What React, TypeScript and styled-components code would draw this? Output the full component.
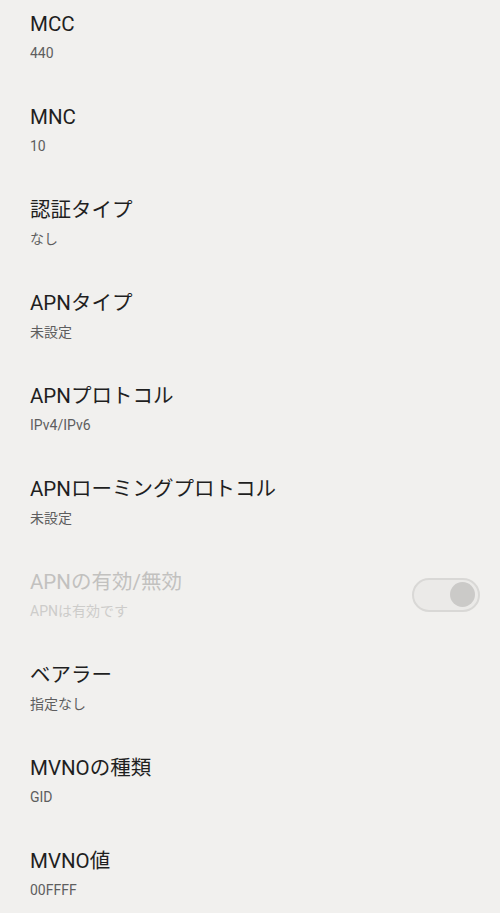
import React from 'react';
import styled, { createGlobalStyle } from 'styled-components';

const GlobalStyle = createGlobalStyle`
  html, body {
    margin: 0;
    padding: 0;
    background: #f1f0ee;
  }
  body {
    font-family: "Roboto", "Noto Sans CJK JP", sans-serif;
  }
`;

// the list is scrolled a little, so the first row sits partly above the top edge
const List = styled.div`
  display: flex;
  flex-direction: column;
  width: 500px;
  height: 913px;
  overflow: hidden;
  background: #f1f0ee;
`;

const Scroller = styled.div`
  display: flex;
  flex-direction: column;
  margin-top: -10px;
`;

const Row = styled.div`
  display: flex;
  align-items: center;
  justify-content: space-between;
  height: 93px;
  padding: 0 20px 0 30px;
  box-sizing: border-box;
  flex-shrink: 0;
`;

const TextBlock = styled.div`
  display: flex;
  flex-direction: column;
  gap: 6px;
`;

const Title = styled.div<{ $disabled?: boolean }>`
  font-size: 20.5px;
  line-height: 26px;
  color: ${(p) => (p.$disabled ? '#c2c1bf' : '#1f1f1f')};
`;

const Summary = styled.div<{ $disabled?: boolean }>`
  font-size: 14px;
  line-height: 20px;
  color: ${(p) => (p.$disabled ? '#cdccca' : '#5e5e5e')};
`;

const Track = styled.div`
  display: flex;
  align-items: center;
  justify-content: flex-end;
  width: 68px;
  height: 34px;
  box-sizing: border-box;
  border: 2px solid #d9d8d6;
  border-radius: 17px;
  background: #ebeae8;
  padding: 0 3px;
`;

const Knob = styled.div`
  width: 25px;
  height: 25px;
  border-radius: 50%;
  background: #cbcac8;
`;

interface Item {
  title: string;
  summary: string;
  disabled?: boolean;
  toggle?: boolean;
}

const items: Item[] = [
  { title: 'MCC', summary: '440' },
  { title: 'MNC', summary: '10' },
  { title: '認証タイプ', summary: 'なし' },
  { title: 'APNタイプ', summary: '未設定' },
  { title: 'APNプロトコル', summary: 'IPv4/IPv6' },
  { title: 'APNローミングプロトコル', summary: '未設定' },
  { title: 'APNの有効/無効', summary: 'APNは有効です', disabled: true, toggle: true },
  { title: 'ベアラー', summary: '指定なし' },
  { title: 'MVNOの種類', summary: 'GID' },
  { title: 'MVNO値', summary: '00FFFF' },
];

const App: React.FC = () => {
  return (
    <>
      <GlobalStyle />
      <List>
        <Scroller>
          {items.map((item) => (
            <Row key={item.title}>
              <TextBlock>
                <Title $disabled={item.disabled}>{item.title}</Title>
                <Summary $disabled={item.disabled}>{item.summary}</Summary>
              </TextBlock>
              {item.toggle && (
                <Track>
                  <Knob />
                </Track>
              )}
            </Row>
          ))}
        </Scroller>
      </List>
    </>
  );
};

export default App;
